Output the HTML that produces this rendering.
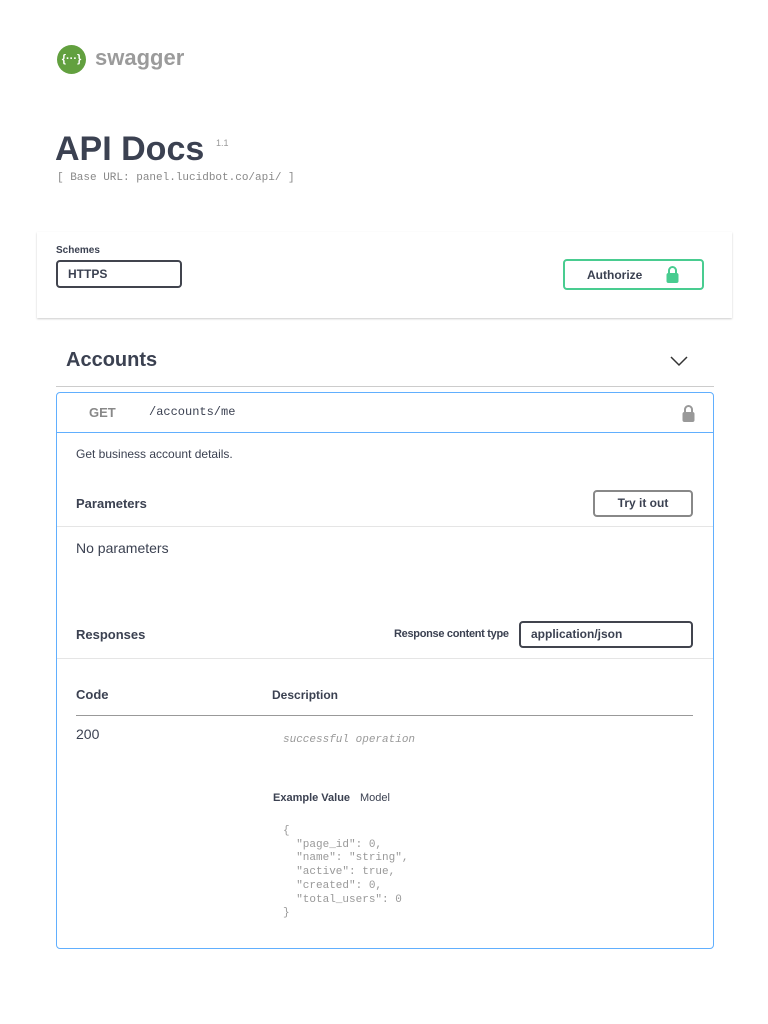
<!DOCTYPE html>
<html><head><meta charset="utf-8"><style>
*{box-sizing:border-box;margin:0;padding:0}
body{width:768px;height:1024px;background:#fff;font-family:"Liberation Sans",sans-serif;color:#3b4151;position:relative;overflow:hidden}
.a{position:absolute}
.mono{font-family:"Liberation Mono",monospace}
</style></head><body>
<div class="a" style="left:57px;top:45px;width:29px;height:29px;border-radius:50%;background:#62a03f;color:#fff;font-size:11px;font-weight:bold;text-align:center;line-height:29px">{···}</div>
<div class="a" style="left:95px;top:45px;font-size:22px;font-weight:bold;color:#9b9b9b">swagger</div>
<div class="a" style="left:55px;top:130px;font-size:34px;font-weight:bold;color:#3b4151">API Docs</div>
<div class="a" style="left:216px;top:138px;font-size:9px;color:#999">1.1</div>
<div class="a mono" style="left:57px;top:172px;font-size:11px;color:#888">[ Base URL: panel.lucidbot.co/api/ ]</div>

<div class="a" style="left:37px;top:232px;width:695px;height:86px;background:#fff;box-shadow:0 1px 2px rgba(0,0,0,.2)"></div>
<div class="a" style="left:56px;top:245px;font-size:10px;font-weight:bold">Schemes</div>
<div class="a" style="left:56px;top:260px;width:126px;height:28px;border:2px solid #41444e;border-radius:4px;font-size:12px;font-weight:bold;padding:5px 10px">HTTPS</div>
<div class="a" style="left:563px;top:259px;width:141px;height:31px;border:2px solid #49cc90;border-radius:4px;font-size:12px;font-weight:bold;color:#3b4151;padding:7px 0 0 22px">Authorize</div>
<svg class="a" style="left:665px;top:265px" width="15" height="18" viewBox="0 0 15 18"><path d="M4 9V5.5a3.5 3.5 0 0 1 7 0V9" fill="none" stroke="#49cc90" stroke-width="2"/><rect x="1.5" y="8" width="12" height="10" rx="2" fill="#49cc90"/></svg>

<div class="a" style="left:66px;top:349px;font-size:20px;font-weight:bold">Accounts</div>
<svg class="a" style="left:670px;top:355px" width="18" height="12"><path d="M1 2l8 8 8-8" fill="none" stroke="#333" stroke-width="1.5"/></svg>
<div class="a" style="left:56px;top:386px;width:658px;height:1px;background:#ccc"></div>

<div class="a" style="left:56px;top:392px;width:658px;height:557px;border:1px solid #61affe;border-radius:4px;background:#fff"></div>
<div class="a" style="left:57px;top:432px;width:656px;height:1px;background:#61affe"></div>
<div class="a" style="left:89px;top:405px;font-size:13px;font-weight:bold;color:#888">GET</div>
<div class="a mono" style="left:149px;top:405px;font-size:12px;color:#3b4151">/accounts/me</div>
<svg class="a" style="left:681px;top:404px" width="15" height="18" viewBox="0 0 15 18"><path d="M4 9V5.5a3.5 3.5 0 0 1 7 0V9" fill="none" stroke="#999" stroke-width="2"/><rect x="1.5" y="8" width="12" height="10" rx="2" fill="#999"/></svg>

<div class="a" style="left:76px;top:447px;font-size:12px">Get business account details.</div>
<div class="a" style="left:76px;top:496px;font-size:13px;font-weight:bold">Parameters</div>
<div class="a" style="left:593px;top:490px;width:100px;height:27px;border:2px solid #888;border-radius:4px;font-size:12px;font-weight:bold;text-align:center;line-height:23px">Try it out</div>
<div class="a" style="left:57px;top:526px;width:656px;height:1px;background:#e5e5e5"></div>
<div class="a" style="left:76px;top:540px;font-size:14px">No parameters</div>

<div class="a" style="left:76px;top:627px;font-size:13px;font-weight:bold">Responses</div>
<div class="a" style="left:394px;top:628px;font-size:11px;font-weight:bold;letter-spacing:-0.3px">Response content type</div>
<div class="a" style="left:519px;top:621px;width:174px;height:27px;border:2px solid #41444e;border-radius:4px;font-size:12px;font-weight:bold;padding:4px 10px">application/json</div>
<div class="a" style="left:57px;top:658px;width:656px;height:1px;background:#e5e5e5"></div>

<div class="a" style="left:76px;top:687px;font-size:13px;font-weight:bold">Code</div>
<div class="a" style="left:272px;top:688px;font-size:12px;font-weight:bold">Description</div>
<div class="a" style="left:76px;top:715px;width:617px;height:1px;background:#999"></div>
<div class="a" style="left:76px;top:726px;font-size:14px">200</div>
<div class="a mono" style="left:283px;top:734px;font-size:11px;font-style:italic;color:#999">successful operation</div>
<div class="a" style="left:273px;top:792px;font-size:11px;font-weight:bold">Example Value</div>
<div class="a" style="left:360px;top:792px;font-size:11px">Model</div>
<pre class="a mono" style="left:283px;top:825px;font-size:11px;line-height:13.7px;color:#999">{
  "page_id": 0,
  "name": "string",
  "active": true,
  "created": 0,
  "total_users": 0
}</pre>
</body></html>
